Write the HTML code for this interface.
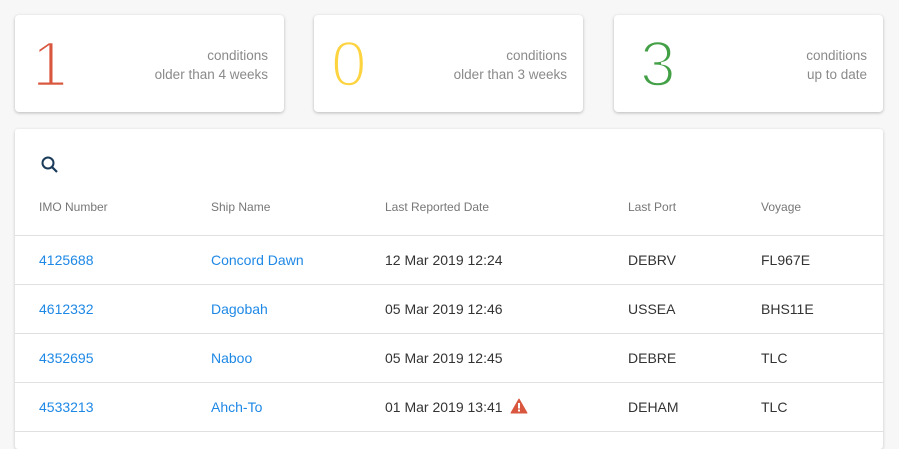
<!DOCTYPE html>
<html><head><style>
body{margin:0;width:899px;height:437px;background:#f7f7f7;font-family:"Liberation Sans",sans-serif;overflow:hidden;position:relative}
.card{position:absolute;top:15px;width:269px;height:97px;background:#fff;border-radius:4px;box-shadow:0 1px 3px rgba(0,0,0,.25)}
.num{position:absolute;left:17px;top:18px;font-size:64px;line-height:62px;-webkit-text-stroke:2.5px #fff}
.lbl{position:absolute;right:16px;top:31px;text-align:right;color:#8a8a8a;font-size:13.5px;line-height:19px}
.tbl{position:absolute;left:15px;top:129px;width:868px;height:320px;background:#fff;box-shadow:0 1px 3px rgba(0,0,0,.2);border-radius:3px}
.c{position:absolute;font-size:14px;color:#333}
.h{position:absolute;top:71px;font-size:12px;color:#777}
.line{position:absolute;left:0;right:0;height:1px;background:#e0e0e0}
a{color:#1e88e5;text-decoration:none}
</style></head><body>
<div class="card" style="left:15px"><div class="num" style="color:#d9573f">1</div><div class="lbl">conditions<br>older than 4 weeks</div></div>
<div class="card" style="left:314px"><div class="num" style="color:#fdd43f">0</div><div class="lbl">conditions<br>older than 3 weeks</div></div>
<div class="card" style="left:614px"><div class="num" style="color:#43a047;left:26px">3</div><div class="lbl">conditions<br>up to date</div></div>
<div class="tbl">
<svg style="position:absolute;left:25px;top:26px" width="20" height="20" viewBox="0 0 20 20"><circle cx="8" cy="8" r="5.5" fill="none" stroke="#1a3a5a" stroke-width="2"/><line x1="12" y1="12" x2="17" y2="17" stroke="#1a3a5a" stroke-width="2.2"/></svg>
<div class="h" style="left:24px">IMO Number</div>
<div class="h" style="left:196px">Ship Name</div>
<div class="h" style="left:370px">Last Reported Date</div>
<div class="h" style="left:613px">Last Port</div>
<div class="h" style="left:746px">Voyage</div>
<div class="line" style="top:106px"></div>
<div class="line" style="top:155px"></div>
<div class="line" style="top:204px"></div>
<div class="line" style="top:253px"></div>
<div class="line" style="top:302px"></div>
<div class="c" style="top:123px;left:24px"><a>4125688</a></div><div class="c" style="top:123px;left:196px"><a>Concord Dawn</a></div><div class="c" style="top:123px;left:370px">12 Mar 2019 12:24</div><div class="c" style="top:123px;left:613px">DEBRV</div><div class="c" style="top:123px;left:746px">FL967E</div>
<div class="c" style="top:172px;left:24px"><a>4612332</a></div><div class="c" style="top:172px;left:196px"><a>Dagobah</a></div><div class="c" style="top:172px;left:370px">05 Mar 2019 12:46</div><div class="c" style="top:172px;left:613px">USSEA</div><div class="c" style="top:172px;left:746px">BHS11E</div>
<div class="c" style="top:221px;left:24px"><a>4352695</a></div><div class="c" style="top:221px;left:196px"><a>Naboo</a></div><div class="c" style="top:221px;left:370px">05 Mar 2019 12:45</div><div class="c" style="top:221px;left:613px">DEBRE</div><div class="c" style="top:221px;left:746px">TLC</div>
<div class="c" style="top:270px;left:24px"><a>4533213</a></div><div class="c" style="top:270px;left:196px"><a>Ahch-To</a></div><div class="c" style="top:270px;left:370px">01 Mar 2019 13:41</div><div class="c" style="top:270px;left:613px">DEHAM</div><div class="c" style="top:270px;left:746px">TLC</div>
<svg style="position:absolute;left:495px;top:269px" width="18" height="16" viewBox="0 0 18 16"><path d="M9 1L17 15H1Z" fill="#d9573f" stroke="#d9573f" stroke-linejoin="round"/><rect x="8" y="5" width="2" height="5.5" fill="#fff"/><rect x="8" y="11.5" width="2" height="2" fill="#fff"/></svg>
</div>
</body></html>
